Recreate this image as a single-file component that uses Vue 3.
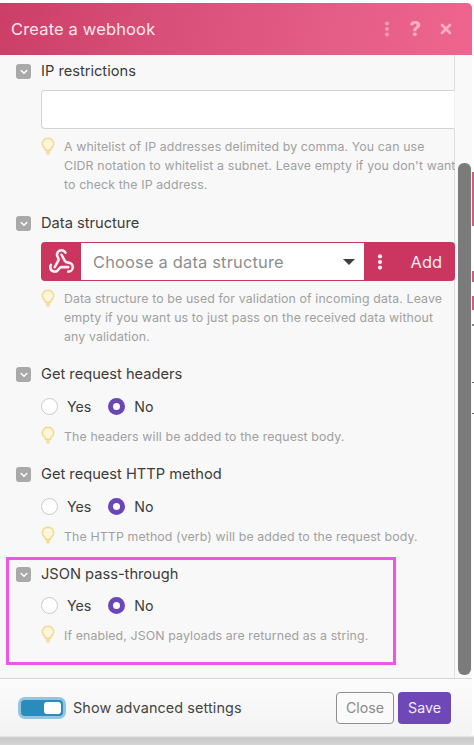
<script setup>
const fields = [
  { label: 'Get request headers', hint: 'The headers will be added to the request body.' },
  { label: 'Get request HTTP method', hint: 'The HTTP method (verb) will be added to the request body.' },
]
</script>

<template>
  <div class="page">
    <div class="modal">
      <header class="head">
        <h1>Create a webhook</h1>
        <div class="head-icons">
          <svg class="ic-dots" width="6" height="16" viewBox="0 0 6 16"><circle cx="3" cy="2.4" r="2" /><circle cx="3" cy="8" r="2" /><circle cx="3" cy="13.6" r="2" /></svg>
          <span class="ic-q">?</span>
          <svg class="ic-x" width="12" height="12" viewBox="0 0 12 12"><path d="M2 2l8 8M10 2l-8 8" /></svg>
        </div>
      </header>

      <div class="middle">
        <div class="body">
          <section class="field f-ip">
            <div class="label"><span class="chev"><svg width="8" height="6" viewBox="0 0 8 6"><path d="M1.2 1.5L4 4.2l2.8-2.7" /></svg></span>IP restrictions</div>
            <div class="input"></div>
            <div class="hint">
              <svg class="bulb" width="14" height="18" viewBox="0 0 14 18"><path d="M7 1.2a5.6 5.6 0 0 0-3.4 10c.7.6 1 1.2 1 2h4.8c0-.8.3-1.4 1-2A5.6 5.6 0 0 0 7 1.2z" /><path class="base" d="M4.9 15h4.2M5.6 16.8h2.8" /></svg>
              <p>A whitelist of IP addresses delimited by comma. You can use CIDR notation to whitelist a subnet. Leave empty if you don't want to check the IP address.</p>
            </div>
          </section>

          <section class="field f-ds">
            <div class="label"><span class="chev"><svg width="8" height="6" viewBox="0 0 8 6"><path d="M1.2 1.5L4 4.2l2.8-2.7" /></svg></span>Data structure</div>
            <div class="picker">
              <span class="hook">
                <svg width="27" height="27" viewBox="0 0 24 24" fill="none"><path d="M18 16.98h-5.99c-1.1 0-1.95.94-2.48 1.9A4 4 0 0 1 2 17c.01-.7.2-1.4.57-2" /><path d="m6 17 3.13-5.78c.53-.97.1-2.18-.5-3.1a4 4 0 1 1 6.89-4.06" /><path d="m12 6 3.13 5.73C15.66 12.7 16.9 13 18 13a4 4 0 0 1 0 8" /></svg>
              </span>
              <span class="select">Choose a data structure<i class="caret"></i></span>
              <span class="add">
                <svg width="6" height="16" viewBox="0 0 6 16"><circle cx="3" cy="2.4" r="2.1" /><circle cx="3" cy="8" r="2.1" /><circle cx="3" cy="13.6" r="2.1" /></svg>
                <b>Add</b>
              </span>
            </div>
            <div class="hint">
              <svg class="bulb" width="14" height="18" viewBox="0 0 14 18"><path d="M7 1.2a5.6 5.6 0 0 0-3.4 10c.7.6 1 1.2 1 2h4.8c0-.8.3-1.4 1-2A5.6 5.6 0 0 0 7 1.2z" /><path class="base" d="M4.9 15h4.2M5.6 16.8h2.8" /></svg>
              <p>Data structure to be used for validation of incoming data. Leave empty if you want us to just pass on the received data without any validation.</p>
            </div>
          </section>

          <section v-for="f in fields" :key="f.label" class="field f-radio">
            <div class="label"><span class="chev"><svg width="8" height="6" viewBox="0 0 8 6"><path d="M1.2 1.5L4 4.2l2.8-2.7" /></svg></span>{{ f.label }}</div>
            <div class="radios">
              <span class="radio"></span><span class="rtext">Yes</span>
              <span class="radio on"></span><span class="rtext">No</span>
            </div>
            <div class="hint">
              <svg class="bulb" width="14" height="18" viewBox="0 0 14 18"><path d="M7 1.2a5.6 5.6 0 0 0-3.4 10c.7.6 1 1.2 1 2h4.8c0-.8.3-1.4 1-2A5.6 5.6 0 0 0 7 1.2z" /><path class="base" d="M4.9 15h4.2M5.6 16.8h2.8" /></svg>
              <p>{{ f.hint }}</p>
            </div>
          </section>

          <section class="field f-radio f-json">
            <div class="label"><span class="chev"><svg width="8" height="6" viewBox="0 0 8 6"><path d="M1.2 1.5L4 4.2l2.8-2.7" /></svg></span>JSON pass-through</div>
            <div class="radios">
              <span class="radio"></span><span class="rtext">Yes</span>
              <span class="radio on"></span><span class="rtext">No</span>
            </div>
            <div class="hint">
              <svg class="bulb" width="14" height="18" viewBox="0 0 14 18"><path d="M7 1.2a5.6 5.6 0 0 0-3.4 10c.7.6 1 1.2 1 2h4.8c0-.8.3-1.4 1-2A5.6 5.6 0 0 0 7 1.2z" /><path class="base" d="M4.9 15h4.2M5.6 16.8h2.8" /></svg>
              <p>If enabled, JSON payloads are returned as a string.</p>
            </div>
            <div class="mark"></div>
          </section>
        </div>
        <div class="track"><div class="thumb"></div></div>
      </div>

      <footer class="foot">
        <span class="toggle"><i></i></span>
        <span class="adv">Show advanced settings</span>
        <span class="btn close">Close</span>
        <span class="btn save">Save</span>
      </footer>
    </div>
    <div class="edge"><i class="e1"></i><i class="e2"></i><i class="e3"></i><i class="e4"></i><i class="e5"></i><i class="e6"></i></div>
  </div>
</template>

<style>
html, body { margin: 0; background: #fff; }
</style>

<style scoped>
.page {
  position: relative;
  width: 474px;
  height: 745px;
  overflow: hidden;
  padding-top: 3px;
  box-sizing: border-box;
  background: linear-gradient(#fff 0, #fff 735px, #c9c9c9 738px, #d6d6d6 745px);
  font-family: Inter, "Liberation Sans", sans-serif;
  color: #3c3c3c;
}
.modal {
  width: 472px;
  height: 733px;
  display: flex;
  flex-direction: column;
  border-radius: 0 5px 5px 0;
  overflow: hidden;
  background: #f8f8f8;
}
.head {
  height: 52px;
  flex: none;
  display: flex;
  align-items: center;
  justify-content: space-between;
  padding: 0 20px 0 11px;
  background: linear-gradient(100deg, #cc3e66 0%, #d8507a 35%, #e65f88 75%, #ee648e 100%);
}
.head h1 {
  margin: 0;
  font-size: 16.5px;
  font-weight: 400;
  color: #fbe6ec;
  letter-spacing: 0.15px;
}
.head-icons { display: flex; align-items: center; }
.ic-dots { fill: #f29ab6; margin-right: 19px; }
.ic-q { font-size: 20px; font-weight: 800; line-height: 1; color: #f5aec4; margin-right: 19px; }
.ic-x { fill: none; stroke: #f5aec4; stroke-width: 2.6; stroke-linecap: round; }

.middle { flex: 1; min-height: 0; display: flex; }
.body {
  width: 455px;
  flex: none;
  box-sizing: border-box;
  border-right: 1px solid #dedede;
  position: relative;
}
.track { flex: 1; position: relative; background: #f9f9f9; }
.thumb {
  position: absolute;
  left: 3px;
  right: 1px;
  top: 108px;
  bottom: 3px;
  border-radius: 6px;
  background: #7b7b7b;
}

.field { position: relative; padding-left: 41px; }
.f-ip { padding-top: 6px; height: 158px; box-sizing: border-box; }
.f-ds { height: 151px; box-sizing: border-box; }
.f-radio { height: 100px; box-sizing: border-box; }
.label {
  height: 20px;
  line-height: 20px;
  font-size: 14.65px;
  position: relative;
}
.chev {
  position: absolute;
  left: -25px;
  top: 3px;
  width: 15px;
  height: 15px;
  border-radius: 3px;
  background: #a9a9a9;
  display: flex;
  align-items: center;
  justify-content: center;
}
.chev svg { fill: none; stroke: #fff; stroke-width: 1.5; stroke-linecap: round; }

.input {
  margin: 9px -1px 0 0;
  height: 39px;
  box-sizing: border-box;
  background: #fff;
  border: 1px solid #d3d3d3;
  border-right-color: #eee;
  border-radius: 4px 0 0 4px;
}
.hint { position: relative; padding: 9px 0 0 23px; }
.bulb { position: absolute; left: 0; top: 8px; }
.bulb path { fill: #fdf6dd; stroke: #f3d98a; stroke-width: 1.5; }
.bulb .base { fill: none; stroke: #f3d98a; stroke-width: 1.6; }
.hint p {
  margin: 0 -3.5px 0 0;
  font-size: 12.35px;
  line-height: 18.8px;
  color: #a0a0a0;
  letter-spacing: 0.12px;
}

.picker {
  margin: 9px -1px 0 0;
  height: 39px;
  display: flex;
  border-radius: 4px;
  background: #cb3660;
  box-sizing: border-box;
  padding: 1px 0;
}
.hook { width: 40px; flex: none; display: flex; align-items: center; justify-content: center; }
.hook svg path { stroke: #fbeef2; stroke-width: 2.3; stroke-linecap: round; stroke-linejoin: round; }
.select {
  flex: 1;
  display: flex;
  align-items: center;
  background: #fff;
  padding-left: 12px;
  font-size: 16.4px;
  color: #8d8d8d;
  letter-spacing: 0.2px;
  position: relative;
}
.caret {
  position: absolute;
  right: 9px;
  top: 16px;
  border-left: 6px solid transparent;
  border-right: 6px solid transparent;
  border-top: 6px solid #3f3f3f;
}
.add {
  width: 91px;
  flex: none;
  display: flex;
  align-items: center;
  justify-content: space-between;
  padding: 0 13px 0 13px;
  box-sizing: border-box;
  color: #fdecf1;
}
.add svg { fill: #fdecf1; }
.add b { font-weight: 400; font-size: 16.4px; }

.radios { display: flex; align-items: center; height: 22px; margin-top: 11px; font-size: 14.2px; }
.radio {
  width: 17px;
  height: 17px;
  box-sizing: border-box;
  border-radius: 50%;
  border: 1px solid #c9c9c9;
  background: #fff;
}
.radio.on { border: 5px solid #6b46b5; background: #fff; }
.rtext { margin-left: 9px; margin-right: 17px; }
.f-radio .hint { padding-top: 11px; }
.f-radio .bulb { top: 9px; }
.f-json .radios { margin-top: 10px; }

.mark {
  position: absolute;
  left: 6px;
  top: -7px;
  width: 390px;
  height: 108px;
  box-sizing: border-box;
  border: 3px solid #f354e8;
  pointer-events: none;
}

.foot {
  height: 58px;
  flex: none;
  border-top: 1px solid #d6d6d6;
  box-sizing: border-box;
  display: flex;
  align-items: center;
  padding: 0 21px 0 18px;
  background: linear-gradient(#fbfbfb, #f3f3f3);
}
.toggle {
  width: 48px;
  height: 22px;
  flex: none;
  box-sizing: border-box;
  border-radius: 7px;
  background: #2a8bbd;
  border: 3px solid #94c4de;
  position: relative;
  margin-right: 7px;
}
.toggle i {
  position: absolute;
  right: 2px;
  top: 2px;
  width: 17px;
  height: 12px;
  border-radius: 3px;
  background: #fff;
}
.adv { flex: 1; font-size: 14.4px; letter-spacing: 0.1px; color: #444; }
.btn {
  height: 32px;
  box-sizing: border-box;
  border-radius: 4px;
  display: flex;
  align-items: center;
  justify-content: center;
  font-size: 14.2px;
}
.close { width: 58px; border: 1px solid #8f8f8f; color: #8b8b8b; background: #fafafa; margin-right: 4px; }
.save { width: 53px; background: #6e48b6; color: #f2ecfa; }

.edge { position: absolute; right: 0; top: 0; width: 2px; height: 100%; }
.edge i { position: absolute; left: 0; width: 2px; background: #cf5f80; }
.e1 { top: 172px; height: 54px; }
.e2 { top: 271px; height: 11px; }
.e3 { top: 296px; height: 14px; }
.edge .e4 { top: 324px; height: 2px; background: #888; }
.edge .e5 { top: 382px; height: 1px; background: #666; }
.edge .e6 { top: 413px; height: 1px; background: #666; }
</style>
